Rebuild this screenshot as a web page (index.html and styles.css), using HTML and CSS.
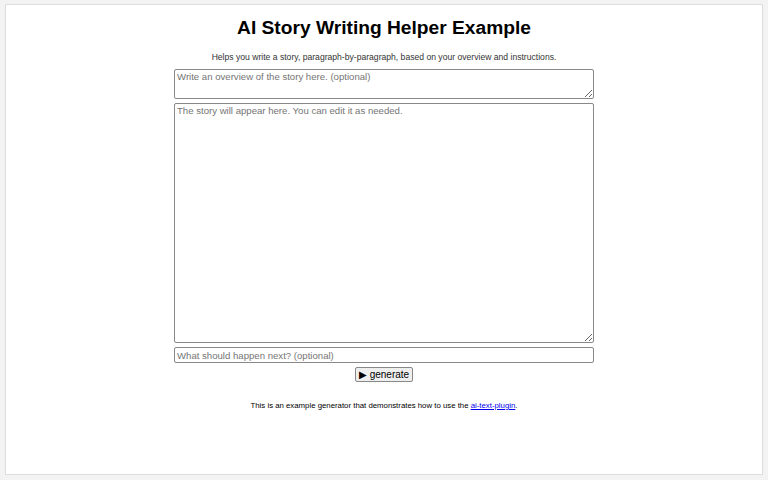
FILE: index.html
```html
<!DOCTYPE html>
<html lang="en">
<head>
    <meta charset="UTF-8">
    <meta name="viewport" content="width=device-width, initial-scale=1.0">
    <title>AI Story Writing Helper Example</title>
    <link rel="stylesheet" href="styles.css">
</head>
<body>
    <div class="container">
        <h1>AI Story Writing Helper Example</h1>
        <p class="intro">Helps you write a story, paragraph-by-paragraph, based on your overview and instructions.</p>
        <div class="editor">
            <textarea id="overview" class="overview" placeholder="Write an overview of the story here. (optional)"></textarea>
            <textarea id="story" class="story" placeholder="The story will appear here. You can edit it as needed."></textarea>
            <input type="text" id="instruction" class="instruction" placeholder="What should happen next? (optional)">
            <button id="generateButton" class="generate-button">▶ generate</button>
        </div>
        <p class="footer">This is an example generator that demonstrates how to use the <a href="#">ai-text-plugin</a>.</p>
    </div>
</body>
</html>
```

FILE: styles.css
```css
body {
    font-family: "Liberation Sans", Arial, sans-serif;
    background-color: #f3f3f3;
    margin: 0;
    padding: 4px 5px 5px 5px;
    height: 100vh;
    box-sizing: border-box;
}
.container {
    background-color: #fff;
    border: 1px solid #ddd;
    height: 100%;
    box-sizing: border-box;
    text-align: center;
}
h1 {
    font-size: 19.2px;
    margin: 12px 0 0 0;
    color: #000;
}
.intro {
    font-size: 8.6px;
    color: #333;
    margin: 13px 0 7px 0;
}
.editor {
    width: 420px;
    margin: 0 auto;
    display: flex;
    flex-direction: column;
    align-items: center;
    gap: 4px;
}
.editor textarea,
.editor input {
    width: 100%;
    box-sizing: border-box;
    font-family: "Liberation Sans", Arial, sans-serif;
    font-size: 9.6px;
    border: 1px solid #888;
    border-radius: 2px;
    padding: 1px 2px;
    margin: 0;
}
.overview {
    height: 30px;
}
.story {
    height: 240px;
}
.instruction {
    height: 16px;
}
.generate-button {
    font-family: "Liberation Sans", Arial, sans-serif;
    font-size: 10px;
    padding: 0 3px;
    height: 15px;
    border: 1px solid #888;
    border-radius: 2px;
    background-color: #efefef;
    color: #000;
}
.footer {
    font-size: 7.8px;
    margin: 19px 0 0 0;
}
.footer a {
    color: #00e;
}
```
